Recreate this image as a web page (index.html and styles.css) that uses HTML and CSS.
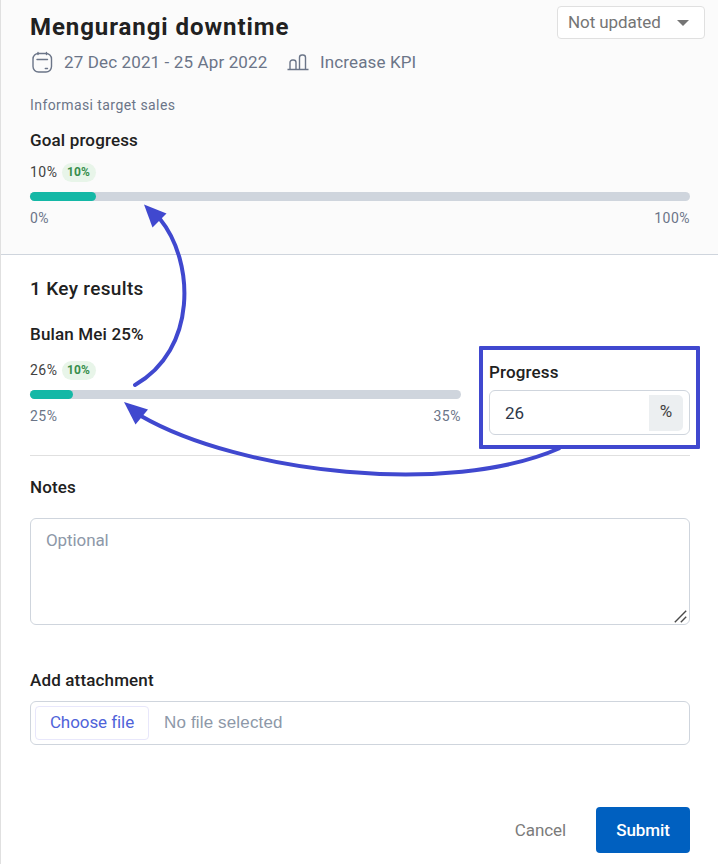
FILE: index.html
```html
<!DOCTYPE html>
<html lang="id">
<head>
<meta charset="utf-8">
<title>Mengurangi downtime</title>
<link rel="stylesheet" href="styles.css">
</head>
<body>
<main class="panel">
  <header class="goal">
    <div class="title-row">
      <h1 class="title">Mengurangi downtime</h1>
      <button class="status"><span>Not updated</span>
        <svg width="12" height="6" viewBox="0 0 12 6"><path d="M0 0h12L6 6z" fill="#757575"/></svg>
      </button>
    </div>
    <div class="meta">
      <svg class="icon-calendar" width="22" height="22" viewBox="0 0 22 22" fill="none" stroke="#6b7588" stroke-width="1.4" stroke-linecap="round">
        <rect x="2" y="2.500" width="18.500" height="18.500" rx="5.500"/>
        <path d="M7 1.500v2M15.500 1.500v2M6 8.500H16.500M14.300 17.500h2.200"/>
      </svg>
      <span class="dates">27 Dec 2021 - 25 Apr 2022</span>
      <svg class="icon-chart" width="22" height="18" viewBox="0 0 22 18" fill="none" stroke="#6b7588" stroke-width="1.4">
        <path d="M.5 16.500h21M3 16.500V9.500a2.500 2.500 0 0 1 2.500-2.500h1A2.500 2.500 0 0 1 9 9.500v7M12.500 16.500V4.500A2.500 2.500 0 0 1 15 2h1a2.500 2.500 0 0 1 2.500 2.500v12"/>
      </svg>
      <span class="parent">Increase KPI</span>
    </div>
    <p class="description">Informasi target sales</p>
    <h2 class="label">Goal progress</h2>
    <div class="current"><span class="percent">10%</span><span class="badge">10%</span></div>
    <div class="bar"><div class="fill" style="width:10%"></div></div>
    <div class="range"><span>0%</span><span>100%</span></div>
  </header>

  <section class="results">
    <h2 class="results-title">1 Key results</h2>
    <div class="result-row">
      <div class="result">
        <h3 class="label kr-name">Bulan Mei 25%</h3>
        <div class="current"><span class="percent">26%</span><span class="badge">10%</span></div>
        <div class="bar"><div class="fill" style="width:10%"></div></div>
        <div class="range"><span>25%</span><span>35%</span></div>
      </div>
      <div class="progress-box">
        <label class="label progress-label">Progress</label>
        <div class="number-field"><span class="value">26</span><span class="unit">%</span></div>
      </div>
    </div>
  </section>

  <section class="notes">
    <h3 class="label notes-label">Notes</h3>
    <div class="textarea"><span>Optional</span>
      <svg class="grip" width="13" height="13" viewBox="0 0 13 13" stroke="#4a4a4a" stroke-width="1.4"><path d="M.8 12.200L12.200 .8M6.800 12.200L12.200 6.800"/></svg>
    </div>
    <h3 class="label attach-label">Add attachment</h3>
    <div class="file-field"><span class="choose">Choose file</span><span class="no-file">No file selected</span></div>
  </section>

  <footer class="actions">
    <button class="cancel">Cancel</button>
    <button class="submit">Submit</button>
  </footer>

  <svg class="arrows" width="718" height="864" viewBox="0 0 718 864" fill="none" stroke="#4048cf" stroke-width="4">
    <path d="M160 219C195 262 197 350 135 385" stroke-linecap="round"/>
    <path d="M144 204.500L166.500 213.500L152.500 227.500Z" fill="#4048cf" stroke="none"/>
    <path d="M560 448C450 497 240 473 141 416"/>
    <path d="M124 402L148 409.500L135.500 424.500Z" fill="#4048cf" stroke="none"/>
  </svg>
</main>
</body>
</html>
```
FILE: styles.css
```css
* { box-sizing: border-box; }
body { margin: 0; background: #fff; font-family: Roboto, "Liberation Sans", sans-serif; }
h1, h2, h3, p { margin: 0; }
button { font: inherit; margin: 0; cursor: pointer; }

.panel { position: relative; width: 718px; height: 864px; border-left: 1px solid #e0e0e0; overflow: hidden; }

.goal { height: 255px; padding: 6px 28px 0 29px; background: #fbfbfb; border-bottom: 1px solid #cfd5dd; }
.title-row { display: flex; justify-content: space-between; align-items: flex-start; height: 44px; margin-right: -15px; }
.title { font-size: 24px; line-height: 36px; margin-top: 3px; font-weight: 700; letter-spacing: 0.93px; color: #212121; }
.status { display: flex; align-items: center; justify-content: space-between; width: 148px; height: 33px; padding: 0 15px 0 10px; border: 1px solid #e0e0e0; border-radius: 4px; background: #fff; color: #757575; font-size: 17px; letter-spacing: -0.07px; }
.status span { padding-bottom: 1px; line-height: 19px; }

.meta { display: flex; align-items: center; height: 24px; font-size: 17px; line-height: 24px; color: #6b7588; }
.icon-calendar { margin: 0 11px 0 1px; }
.dates { width: 223px; letter-spacing: 0.13px; white-space: nowrap; }
.icon-chart { margin-right: 11px; }
.parent { letter-spacing: 0.13px; }
.description { margin-top: 21px; font-size: 14px; line-height: 20px; letter-spacing: 0.42px; color: #6b7588; }
.label { font-size: 17px; line-height: 20px; font-weight: 500; letter-spacing: 0.15px; color: #212121; }
.goal .label { margin-top: 15px; }

.current { display: flex; align-items: center; gap: 4px; height: 20px; margin-top: 12px; }
.percent { font-size: 14px; letter-spacing: 0.5px; color: #424242; }
.badge { width: 34px; height: 19px; border-radius: 10px; background: #e8f5e9; color: #388e4c; font-size: 12px; line-height: 18px; font-weight: 700; letter-spacing: 0.2px; text-align: center; }
.bar { height: 9px; margin-top: 10px; border-radius: 5px; background: #cfd5dd; }
.fill { height: 9px; border-radius: 5px; background: #14b8a6; }
.range { display: flex; justify-content: space-between; margin-top: 7px; font-size: 14px; line-height: 20px; letter-spacing: 0.5px; color: #6b7588; }

.results { height: 201px; margin: 0 28px 0 29px; padding-top: 22px; border-bottom: 1px solid #e0e0e0; }
.results-title { font-size: 19px; line-height: 24px; font-weight: 500; letter-spacing: 0.33px; color: #212121; }
.result-row { display: flex; justify-content: space-between; align-items: flex-start; margin-right: -10px; }
.result { width: 431px; padding-top: 23px; }
.result .current { margin-top: 16px; }
.progress-box { width: 221px; height: 103px; margin-top: 45px; padding: 13px 6px 0; border: 4px solid #4048cf; border-radius: 1px; }
.progress-label { display: block; line-height: 19px; }
.number-field { display: flex; justify-content: space-between; align-items: center; width: 201px; height: 45px; margin-top: 8px; padding: 0 6px 0 15px; border: 1px solid #cfd5dd; border-radius: 6px; color: #2d3748; font-size: 17px; }
.unit { width: 34px; height: 36px; border-radius: 0 5px 5px 0; background: #eceff1; color: #424242; line-height: 33px; text-align: center; }

.notes { margin: 0 28px 0 29px; padding-top: 21px; }
.textarea { position: relative; height: 107px; margin-top: 21px; padding: 9px 15px; border: 1px solid #cfd5dd; border-radius: 6px; color: #8d98a8; font-size: 17px; line-height: 24px; letter-spacing: -0.1px; }
.grip { position: absolute; right: 2px; bottom: 1px; }
.attach-label { margin-top: 45px; }
.file-field { display: flex; align-items: center; height: 44px; margin-top: 11px; padding: 0 4px; border: 1px solid #cfd5dd; border-radius: 6px; font-size: 17px; }
.choose { width: 114px; height: 34px; margin-right: 15px; border: 1px solid #e8e7fb; border-radius: 4px; color: #4f63d9; line-height: 31px; letter-spacing: -0.07px; text-align: center; }
.no-file { color: #8d98a8; font-family: "Liberation Sans", sans-serif; letter-spacing: 0.15px; }

.actions { display: flex; justify-content: flex-end; align-items: center; margin: 62px 28px 0 29px; }
.cancel { border: 0; padding: 0; margin-right: 30px; background: none; color: #7b7b7b; font-size: 17px; letter-spacing: -0.1px; }
.submit { width: 94px; height: 46px; border: 0; border-radius: 4px; background: #0060c0; color: #fff; font-size: 17px; font-weight: 500; letter-spacing: -0.1px; }

.arrows { position: absolute; top: 0; left: -1px; pointer-events: none; }
```
